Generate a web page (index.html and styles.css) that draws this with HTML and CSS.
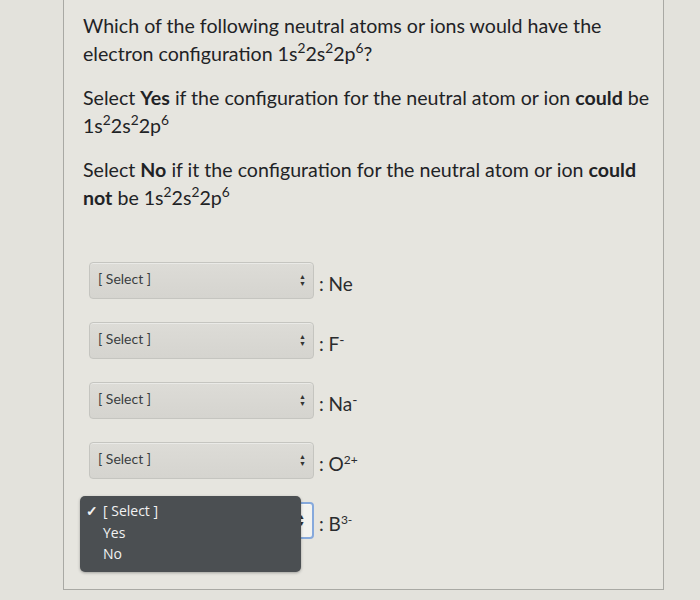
FILE: index.html
```html
<!DOCTYPE html>
<html>
<head>
<meta charset="utf-8">
<link rel="stylesheet" href="styles.css">
</head>
<body>
<div class="panel">
  <div class="question">
    <p class="para">Which of the following neutral atoms or ions would have the electron configuration 1s<sup>2</sup>2s<sup>2</sup>2p<sup>6</sup>?</p>
    <p class="para">Select <b>Yes</b> if the configuration for the neutral atom or ion <b>could</b> be 1s<sup>2</sup>2s<sup>2</sup>2p<sup>6</sup></p>
    <p class="para">Select <b>No</b> if it the configuration for the neutral atom or ion <b>could not</b> be 1s<sup>2</sup>2s<sup>2</sup>2p<sup>6</sup></p>
  </div>
  <div class="rows">
    <div class="row">
      <div class="select"><span class="sel-text">[ Select ]</span><span class="arrows">&#9650;<br>&#9660;</span></div>
      <span class="label">: Ne</span>
    </div>
    <div class="row">
      <div class="select"><span class="sel-text">[ Select ]</span><span class="arrows">&#9650;<br>&#9660;</span></div>
      <span class="label">: F<sup class="sm">-</sup></span>
    </div>
    <div class="row">
      <div class="select"><span class="sel-text">[ Select ]</span><span class="arrows">&#9650;<br>&#9660;</span></div>
      <span class="label">: Na<sup class="sm">-</sup></span>
    </div>
    <div class="row">
      <div class="select"><span class="sel-text">[ Select ]</span><span class="arrows">&#9650;<br>&#9660;</span></div>
      <span class="label">: O<sup>2+</sup></span>
    </div>
    <div class="row last">
      <div class="select focused"><span class="sel-text">[ Select ]</span><span class="arrows">&#9650;<br>&#9660;</span></div>
      <span class="label">: B<sup>3-</sup></span>
      <div class="menu">
        <div class="item"><span class="check">&#10003;</span>[ Select ]</div>
        <div class="item">Yes</div>
        <div class="item">No</div>
      </div>
    </div>
  </div>
</div>
</body>
</html>
```
FILE: styles.css
```css
html, body {
  margin: 0;
  padding: 0;
  background: #e3e2dc;
}
body {
  width: 700px;
  height: 600px;
  overflow: hidden;
  font-family: Lato, "Liberation Sans", sans-serif;
  color: #1f2326;
}
.panel {
  margin-left: 63px;
  width: 601px;
  height: 590px;
  border-left: 1.5px solid #a9a9a4;
  border-right: 1.5px solid #a9a9a4;
  border-bottom: 1.5px solid #a9a9a4;
  box-sizing: border-box;
  background: #e6e5df;
  padding: 12px 0 0 19px;
}
.question {
  width: 578px;
}
.para {
  margin: 0 0 16px 0;
  font-size: 19.6px;
  line-height: 28px;
}
.para b {
  font-weight: 700;
}
sup {
  font-size: 0.7em;
  line-height: 0;
  vertical-align: 0.55em;
}
.rows {
  margin-top: 50px;
  margin-left: 6px;
  display: flex;
  flex-direction: column;
  gap: 23px;
}
.row {
  display: flex;
  align-items: center;
  gap: 5px;
  position: relative;
}
.select {
  width: 225px;
  height: 37px;
  box-sizing: border-box;
  border: 1px solid #c5c5c0;
  border-radius: 4px;
  background: linear-gradient(#dddcd7, #d5d4cf);
  display: flex;
  align-items: center;
  justify-content: space-between;
  padding: 0 7px 0 8px;
  box-shadow: inset 0 1px 0 rgba(255,255,255,0.4);
}
.sel-text {
  font-size: 14px;
  color: #3a3d40;
  margin-top: -5px;
}
.arrows {
  font-size: 7px;
  line-height: 7px;
  color: #333;
  text-align: center;
  margin-top: -2px;
}
.label {
  font-size: 19px;
  color: #2a2c2e;
  margin-top: 6px;
}
.label sup {
  font-size: 12px;
  vertical-align: 7px;
}
.label sup.sm {
  font-size: 14px;
  vertical-align: 6px;
}
.focused {
  border: 2px solid #86a9dc;
  background: #f3f3f0;
}
.menu {
  position: absolute;
  left: -9px;
  top: -6px;
  width: 221px;
  height: 76px;
  box-sizing: border-box;
  background: #4b4f52;
  border-radius: 5px;
  padding: 4px 0 0 23px;
  box-shadow: 0 1px 3px rgba(0,0,0,0.3);
}
.item {
  font-family: "Open Sans", "Liberation Sans", sans-serif;
  font-size: 14px;
  line-height: 21.5px;
  color: #f2f2f2;
  position: relative;
}
.check {
  position: absolute;
  left: -17px;
  font-size: 14px;
  font-weight: 700;
}
```
